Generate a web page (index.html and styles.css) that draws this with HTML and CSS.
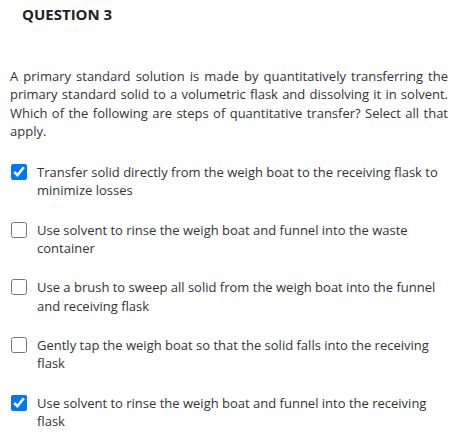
FILE: index.html
```html
<!DOCTYPE html>
<html>
<head>
<meta charset="utf-8">
<link rel="stylesheet" href="styles.css">
</head>
<body>
<div class="page">
  <h2 class="title">QUESTION 3</h2>
  <p class="prompt">A primary standard solution is made by quantitatively transferring the primary standard solid to a volumetric flask and dissolving it in solvent. Which of the following are steps of quantitative transfer? Select all that apply.</p>
  <ul class="options">
    <li class="option"><input type="checkbox" class="box" checked><span class="label">Transfer solid directly from the weigh boat to the receiving flask to minimize losses</span></li>
    <li class="option"><input type="checkbox" class="box"><span class="label">Use solvent to rinse the weigh boat and funnel into the waste container</span></li>
    <li class="option"><input type="checkbox" class="box"><span class="label">Use a brush to sweep all solid from the weigh boat into the funnel and receiving flask</span></li>
    <li class="option"><input type="checkbox" class="box"><span class="label">Gently tap the weigh boat so that the solid falls into the receiving flask</span></li>
    <li class="option"><input type="checkbox" class="box" checked><span class="label">Use solvent to rinse the weigh boat and funnel into the receiving flask</span></li>
  </ul>
</div>
</body>
</html>
```

FILE: styles.css
```css
html, body {
  margin: 0;
  padding: 0;
  background: #ffffff;
}
.page {
  font-family: "Open Sans", "Liberation Sans", sans-serif;
  color: #333333;
  padding: 3px 26px 0 10px;
}
.title {
  margin: 0 0 0 12px;
  font-size: 15px;
  font-weight: 700;
  line-height: 22px;
  color: #222222;
}
.prompt {
  margin: 42px 0 0 0;
  font-size: 13px;
  line-height: 18.3px;
  text-align: justify;
}
.options {
  list-style: none;
  margin: 23px 0 0 0;
  padding: 0;
  display: flex;
  flex-direction: column;
  gap: 21px;
}
.option {
  display: flex;
  align-items: flex-start;
  gap: 10px;
  padding-left: 1px;
}
.box {
  width: 16px;
  height: 16px;
  margin: 1px 0 0 0;
  flex: none;
}
.label {
  font-size: 13px;
  line-height: 18.3px;
}
```
